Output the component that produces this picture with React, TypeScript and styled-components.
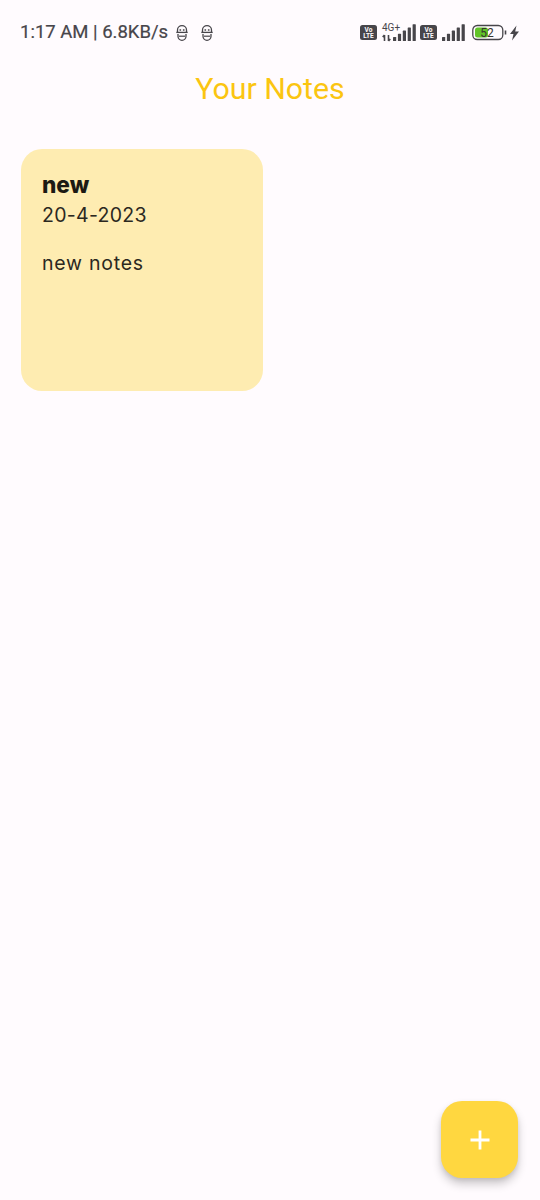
import React from 'react'
import styled, { createGlobalStyle } from 'styled-components'

const GlobalStyle = createGlobalStyle`
  html, body {
    margin: 0;
    padding: 0;
    background: #fffbfe;
  }
`

const Page = styled.div`
  width: 540px;
  height: 1200px;
  overflow: hidden;
  position: relative;
  background: #fffbfe;
  font-family: Roboto, sans-serif;
`

const StatusBar = styled.div`
  height: 33px;
  padding: 16px 20px 0 20px;
  display: flex;
  align-items: center;
  justify-content: space-between;
  color: #47454a;
`

const StatusLeft = styled.div`
  display: flex;
  align-items: center;
`

const StatusText = styled.span`
  font-size: 18.5px;
  line-height: 33px;
  white-space: nowrap;
  -webkit-text-stroke: 0.2px #47454a;
`

const StatusRight = styled.div`
  display: flex;
  align-items: center;
`

const Title = styled.h1`
  margin: 0;
  padding-top: 20px;
  height: 61px;
  text-align: center;
  font-size: 30.3px;
  line-height: 40px;
  font-weight: 400;
  color: #fbc511;
`

const Grid = styled.div`
  padding: 19px 21px 0;
  display: grid;
  grid-template-columns: 242px;
`

const Card = styled.div`
  height: 242px;
  box-sizing: border-box;
  padding: 21px;
  border-radius: 21px;
  background: #feecb1;
  color: #2b281f;
  font-family: Inter, sans-serif;
`

const CardTitle = styled.div`
  font-size: 22.6px;
  line-height: 30px;
  font-weight: 800;
  color: #1c1a14;
`

const CardDate = styled.div`
  font-size: 19.5px;
  line-height: 30px;
  letter-spacing: 0.3px;
`

const CardBody = styled.div`
  margin-top: 18px;
  font-size: 19.5px;
  line-height: 30px;
  letter-spacing: 0.75px;
`

const Fab = styled.button`
  position: absolute;
  left: 441px;
  top: 1101px;
  width: 77px;
  height: 77px;
  border: 0;
  padding: 0;
  border-radius: 21px;
  background: #ffd740;
  box-shadow: 0 6px 10px rgba(0, 0, 0, 0.2), 0 2px 4px rgba(0, 0, 0, 0.08);
  display: flex;
  align-items: center;
  justify-content: center;
`

const SignalIcon = styled.svg<{ $left: number; $right: number }>`
  margin-left: ${(p) => p.$left}px;
  margin-right: ${(p) => p.$right}px;
  overflow: visible;
`

const RobotIcon = ({ gap }: { gap: number }) => (
  <svg width="12" height="16" viewBox="0 0 12 16" style={{ marginLeft: gap }}>
    <path d="M1.5 7V5a4.5 4.3 0 0 1 9 0v2" fill="none" stroke="#47454a" strokeWidth="1.3" />
    <path d="M0.3 7.4h11.4" stroke="#47454a" strokeWidth="1.3" />
    <path d="M2 9v2.3a4 4 0 0 0 8 0V9" fill="none" stroke="#47454a" strokeWidth="1.3" />
    <path d="M3 11.2h6" stroke="#47454a" strokeWidth="1.2" />
    <path d="M3.5 5h1.6M6.9 5h1.6" stroke="#47454a" strokeWidth="1.3" />
  </svg>
)

const VoLte = () => (
  <svg width="17" height="15" viewBox="0 0 17 15">
    <rect width="17" height="15" rx="2.5" fill="#47454a" />
    <text x="8.5" y="6.6" fontSize="6.5" fontWeight="700" textAnchor="middle" fill="#fffbfe" fontFamily="Roboto, sans-serif">Vo</text>
    <text x="8.5" y="13.2" fontSize="6.5" fontWeight="700" textAnchor="middle" fill="#fffbfe" fontFamily="Roboto, sans-serif">LTE</text>
  </svg>
)

const Signal = ({ bars, label }: { bars: number; label?: boolean }) => {
  const w = label ? 35 : 24
  const start = label ? 12 : 0
  return (
    <SignalIcon width={w} height="22" viewBox={`0 0 ${w} 22`} $left={label ? 4 : 5} $right={label ? 4 : 0}>
      {label && (
        <>
          <text x="1" y="9" fontSize="10" fill="#47454a" fontFamily="Roboto, sans-serif">4G+</text>
          <path d="M3.5 13v6M1.7 15l1.8-2M7.5 13v6M7.5 19l1.8-2" stroke="#47454a" strokeWidth="1.6" fill="none" />
        </>
      )}
      {Array.from({ length: bars }).map((_, i) => {
        const h = 4 + i * 3.2
        return <rect key={i} x={start + i * 4.9} y={19 - h} width="3.2" height={h} rx="0.6" fill="#47454a" />
      })}
    </SignalIcon>
  )
}

const Battery = () => (
  <svg width="36" height="18" viewBox="0 0 36 18" style={{ marginLeft: 6 }}>
    <rect x="0.8" y="1.5" width="30" height="14" rx="4.5" fill="none" stroke="#47454a" strokeWidth="1.3" />
    <rect x="3" y="3.5" width="13" height="10" rx="2.5" fill="#62c428" />
    <path d="M33.5 6.5v4" stroke="#47454a" strokeWidth="1.6" />
    <text x="15" y="13.2" fontSize="12" textAnchor="middle" fill="#37352f" fontFamily="Roboto, sans-serif">52</text>
  </svg>
)

const Bolt = () => (
  <svg width="11" height="16" viewBox="0 0 11 16" style={{ marginLeft: 1 }}>
    <path d="M7.5 0.5L1 9h3.5L3 15.5 10 6.5H6.2z" fill="#47454a" />
  </svg>
)

const PlusIcon = () => (
  <svg width="20" height="20" viewBox="0 0 20 20">
    <path d="M10 0.5v19M0.5 10h19" stroke="#fff" strokeWidth="2.8" />
  </svg>
)

export default function App() {
  return (
    <>
      <GlobalStyle />
      <Page>
        <StatusBar>
          <StatusLeft>
            <StatusText>1:17 AM | 6.8KB/s</StatusText>
            <RobotIcon gap={8} />
            <RobotIcon gap={13} />
          </StatusLeft>
          <StatusRight>
            <VoLte />
            <Signal bars={5} label />
            <VoLte />
            <Signal bars={5} />
            <Battery />
            <Bolt />
          </StatusRight>
        </StatusBar>
        <Title>Your Notes</Title>
        <Grid>
          <Card>
            <CardTitle>new</CardTitle>
            <CardDate>20-4-2023</CardDate>
            <CardBody>new notes</CardBody>
          </Card>
        </Grid>
        <Fab aria-label="Add note">
          <PlusIcon />
        </Fab>
      </Page>
    </>
  )
}
